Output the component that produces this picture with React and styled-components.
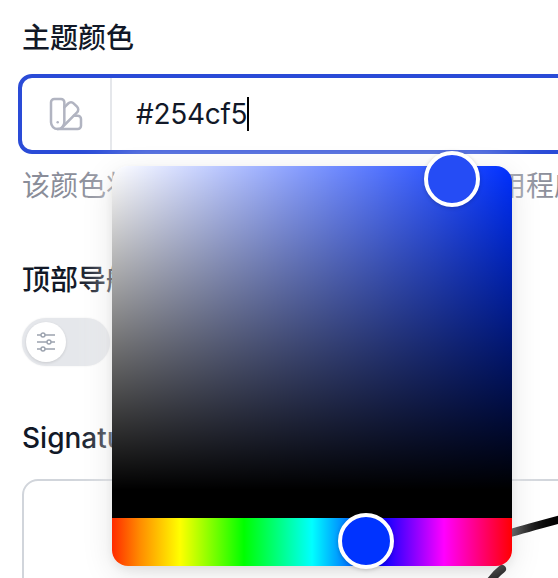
import React from "react";
import styled, { createGlobalStyle } from "styled-components";
import { SwatchBook } from "lucide-react";

const GlobalStyle = createGlobalStyle`
  html, body {
    margin: 0;
    padding: 0;
    height: 100%;
    overflow: hidden;
    background: #fff;
  }
  body {
    font-family: Inter, "Noto Sans CJK SC", sans-serif;
  }
`;

const Page = styled.main`
  position: relative;
  width: 558px;
  height: 578px;
  overflow: hidden;
  padding: 18px 0 0 22px;
  box-sizing: border-box;
`;

const Section = styled.section`
  display: flex;
  flex-direction: column;
  align-items: flex-start;
  margin-bottom: ${(p) => p.$gap || 0}px;
`;

const Label = styled.h2`
  margin: 0 0 ${(p) => p.$gap}px;
  font-size: 28px;
  line-height: 40px;
  font-weight: 500;
  color: #111827;
  white-space: nowrap;
`;

const InputWrap = styled.div`
  display: flex;
  align-items: stretch;
  width: 620px;
  height: 80px;
  margin-left: -4px;
  border: 4px solid #2a4bd7;
  border-radius: 14px;
  box-sizing: border-box;
`;

const InputIcon = styled.div`
  display: flex;
  align-items: center;
  justify-content: center;
  width: 88px;
  flex: none;
  border-right: 2px solid #e5e7eb;
  color: #b1b4c1;
`;

const InputValue = styled.div`
  display: flex;
  align-items: center;
  padding-left: 24px;
  font-size: 28px;
  letter-spacing: -0.3px;
  color: #111827;
`;

const Caret = styled.span`
  width: 2px;
  height: 34px;
  background: #000;
`;

const Helper = styled.p`
  margin: 12px 0 0;
  font-size: 28px;
  line-height: 40px;
  color: #8a8d99;
  white-space: nowrap;
`;

const Toggle = styled.div`
  display: flex;
  align-items: center;
  width: 88px;
  height: 48px;
  padding: 4px;
  box-sizing: border-box;
  border-radius: 24px;
  background: #e5e7eb;
  box-shadow: 0 0 2px rgba(0, 0, 0, 0.08);
`;

const Knob = styled.div`
  display: flex;
  align-items: center;
  justify-content: center;
  width: 40px;
  height: 40px;
  border-radius: 50%;
  background: #fff;
  box-shadow: 0 1px 3px rgba(0, 0, 0, 0.12);
  color: #9ca3af;
`;

const SignatureBox = styled.div`
  position: relative;
  width: 620px;
  height: 300px;
  border: 2px solid #d1d5db;
  border-radius: 16px;
  box-sizing: border-box;
`;

const Ink = styled.svg`
  position: absolute;
  left: 0;
  top: 0;
`;

const Picker = styled.div`
  position: absolute;
  left: 112px;
  top: 166px;
  width: 400px;
  height: 400px;
  display: flex;
  flex-direction: column;
  border-radius: 16px;
  box-shadow: 0 8px 32px rgba(0, 0, 0, 0.1), 0 4px 8px rgba(0, 0, 0, 0.06),
    0 0 40px rgba(255, 255, 255, 0.9);
`;

const Saturation = styled.div`
  flex: 1;
  border-radius: 16px 16px 0 0;
  background: linear-gradient(to top, #000 8%, rgba(0, 0, 0, 0)),
    linear-gradient(to right, #fff, rgba(255, 255, 255, 0)), #0030ff;
`;

const Hue = styled.div`
  height: 48px;
  flex: none;
  border-radius: 0 0 16px 16px;
  background: linear-gradient(
    to right,
    #ff2a00 0%,
    #ff8c00 7%,
    #ff0 17%,
    #0f0 33%,
    #0ff 50%,
    #00f 67%,
    #f0f 83%,
    #f00 100%
  );
`;

const Thumb = styled.div`
  position: absolute;
  left: ${(p) => p.$x}px;
  top: ${(p) => p.$y}px;
  width: 56px;
  height: 56px;
  box-sizing: border-box;
  border: 4px solid #fff;
  border-radius: 50%;
  background: ${(p) => p.$color};
  box-shadow: 0 1px 4px rgba(0, 0, 0, 0.2);
`;

function SlidersIcon() {
  return (
    <svg width="20" height="20" viewBox="0 0 20 20" fill="none" stroke="currentColor" strokeWidth="1.4">
      <path d="M1 3h18M1 10h18M1 17h18" />
      <circle cx="7" cy="3" r="2" fill="#fff" />
      <circle cx="13" cy="10" r="2" fill="#fff" />
      <circle cx="7" cy="17" r="2" fill="#fff" />
    </svg>
  );
}

export default function App() {
  return (
    <Page>
      <GlobalStyle />
      <Section $gap={54}>
        <Label $gap={16}>主题颜色</Label>
        <InputWrap>
          <InputIcon>
            <SwatchBook size={40} strokeWidth={1.5} />
          </InputIcon>
          <InputValue>
            #254cf5
            <Caret />
          </InputValue>
        </InputWrap>
        <Helper>该颜色将作为您的品牌主题色显示在应用程序中</Helper>
      </Section>
      <Section $gap={52}>
        <Label $gap={18}>顶部导航</Label>
        <Toggle>
          <Knob>
            <SlidersIcon />
          </Knob>
        </Toggle>
      </Section>
      <Section>
        <Label $gap={21}>Signature</Label>
        <SignatureBox>
          <Ink width="536" height="100" viewBox="0 0 536 100" fill="none" stroke="#000" strokeWidth="8" strokeLinecap="round">
            <path d="M480 54C500 48 515 44 545 36" />
            <path d="M465 102C470 95 474 91 478 88" />
          </Ink>
        </SignatureBox>
      </Section>
      <Picker>
        <Saturation />
        <Hue />
        <Thumb $x={312} $y={-15} $color="#254cf5" />
        <Thumb $x={226} $y={347} $color="#0033ff" />
      </Picker>
    </Page>
  );
}
